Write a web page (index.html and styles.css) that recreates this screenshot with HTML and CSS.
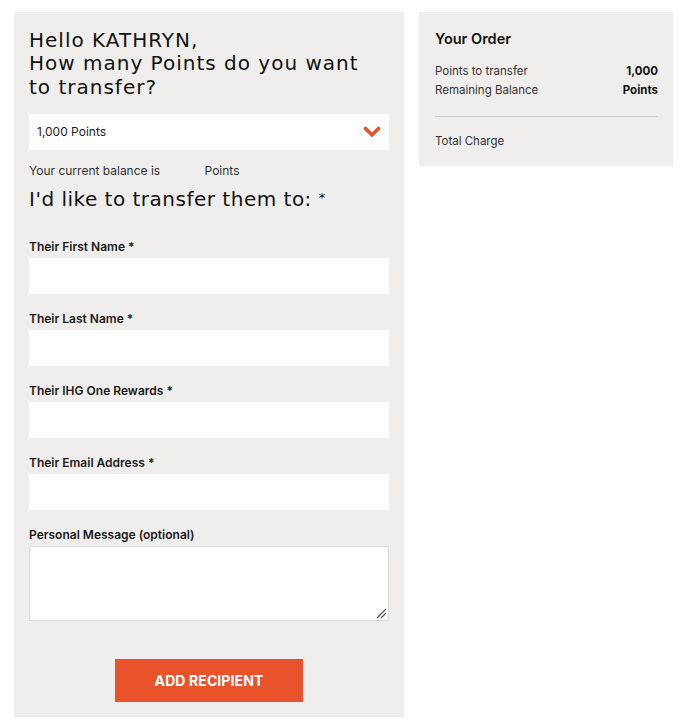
FILE: index.html
```html
<!DOCTYPE html>
<html>
<head>
<meta charset="utf-8">
<link rel="stylesheet" href="styles.css">
</head>
<body>
<div class="page">
  <form class="panel main">
    <h1 class="title">Hello KATHRYN,<br>How many Points do you want to transfer?</h1>
    <div class="select">
      <span>1,000 Points</span>
      <svg class="chev" width="18" height="12" viewBox="0 0 18 12"><path d="M2.5 2.5 L9 9 L15.5 2.5" fill="none" stroke="#e8532b" stroke-width="3.6" stroke-linecap="round" stroke-linejoin="round"/></svg>
    </div>
    <p class="balance">Your current balance is <span class="gap"></span>Points</p>
    <h2 class="sub">I'd like to transfer them to: <span class="star">*</span></h2>
    <label class="lbl">Their First Name *</label>
    <div class="input"></div>
    <label class="lbl">Their Last Name *</label>
    <div class="input"></div>
    <label class="lbl">Their IHG One Rewards *</label>
    <div class="input"></div>
    <label class="lbl">Their Email Address *</label>
    <div class="input"></div>
    <label class="lbl">Personal Message (optional)</label>
    <div class="textarea">
      <svg class="grip" width="12" height="12" viewBox="0 0 12 12"><path d="M11 2 L2 11 M11 6 L6 11" stroke="#555" stroke-width="1.2"/></svg>
    </div>
    <div class="actions"><button type="button" class="btn">ADD RECIPIENT</button></div>
  </form>
  <aside class="panel order">
    <h3 class="order-title">Your Order</h3>
    <div class="row"><span>Points to transfer</span><b>1,000</b></div>
    <div class="row"><span>Remaining Balance</span><b>Points</b></div>
    <hr class="divider">
    <div class="row total"><span>Total Charge</span></div>
  </aside>
</div>
</body>
</html>
```
FILE: styles.css
```css
* { box-sizing: border-box; }
body {
  margin: 0;
  padding: 12px 0 0 14px;
  background: #fff;
  font-family: "Inter", "Liberation Sans", sans-serif;
  color: #1a1a1a;
}
.page {
  display: flex;
  align-items: flex-start;
  gap: 15px;
}
.panel { background: #efeeec; }
.main {
  width: 390px;
  padding: 17px 15px 15px;
  display: flex;
  flex-direction: column;
}
.title {
  margin: 0;
  max-width: 350px;
  font-family: "DejaVu Sans", sans-serif;
  font-weight: 400;
  font-size: 20px;
  line-height: 23.4px;
  letter-spacing: 1px;
  color: #111;
}
.select {
  margin-top: 15px;
  height: 36px;
  background: #fff;
  display: flex;
  align-items: center;
  justify-content: space-between;
  padding: 0 8px 0 8px;
  font-size: 12px;
  color: #222;
}
.select span { margin-top: -2px; }
.balance {
  margin: 13px 0 0;
  font-size: 12px;
  line-height: 16px;
  color: #333;
}
.gap { display: inline-block; width: 41px; }
.sub {
  margin: 6px 0 0;
  font-family: "DejaVu Sans", sans-serif;
  font-weight: 400;
  font-size: 20px;
  line-height: 26px;
  letter-spacing: 0.5px;
  color: #111;
}
.star { font-size: 13px; vertical-align: 4px; }
.lbl {
  margin-top: 27px;
  font-size: 12px;
  font-weight: 600;
  line-height: 16px;
  color: #1a1a1a;
}
.input + .lbl { margin-top: 17px; }
.input {
  margin-top: 3px;
  height: 36px;
  background: #fff;
}
.textarea {
  margin-top: 3px;
  height: 75px;
  background: #fff;
  border: 1px solid #d9d9d9;
  position: relative;
}
.grip { position: absolute; right: 1px; bottom: 1px; }
.actions {
  margin-top: 38px;
  display: flex;
  justify-content: center;
}
.btn {
  width: 188px;
  height: 43px;
  border: 0;
  background: #e8532b;
  color: #fff;
  font-family: "Inter", "Liberation Sans", sans-serif;
  font-weight: 700;
  font-size: 14px;
  letter-spacing: 0.1px;
}
.order {
  width: 254px;
  padding: 17px 15px 15px 16px;
}
.order-title {
  margin: 0;
  font-size: 14.5px;
  font-weight: 600;
  line-height: 20px;
  color: #111;
}
.row {
  display: flex;
  justify-content: space-between;
  font-size: 11.5px;
  line-height: 19px;
  color: #333;
}
.order-title + .row { margin-top: 13px; }
.row b { color: #111; font-weight: 700; }
.divider {
  margin: 16px 0 15px;
  border: 0;
  border-top: 1px solid #cfcecc;
}
```
